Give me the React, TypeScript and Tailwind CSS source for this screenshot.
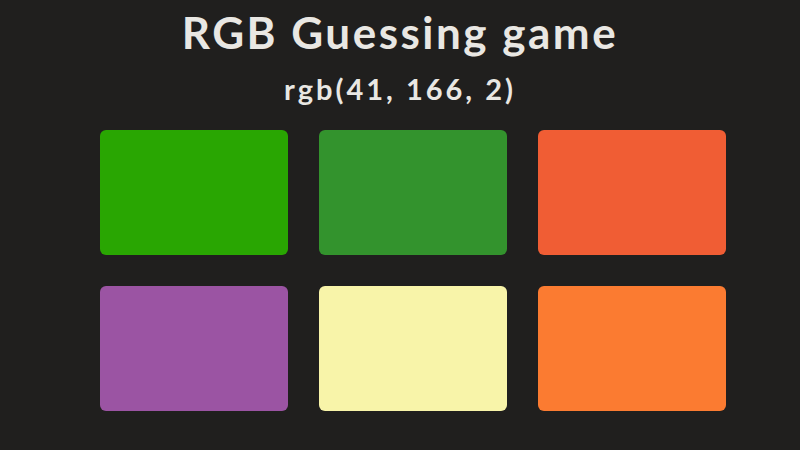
import React from "react";

const swatches = ["#29a602", "#33932d", "#f05d34", "#9b54a3", "#f8f4a9", "#fb7b31"];

export default function App() {
  return (
    <div className="w-[800px] h-[450px] bg-[#201f1e] text-[#e9e7e3] overflow-hidden" style={{ fontFamily: "Lato, 'Liberation Sans', sans-serif" }}>
      <h1 className="text-center text-[44px] font-bold leading-none pt-[10px] tracking-[2.5px]">RGB Guessing game</h1>
      <h2 className="text-center text-[29px] font-bold leading-none mt-[20px] tracking-[3px]">rgb(41, 166, 2)</h2>
      <div className="grid grid-cols-[188px_188px_188px] gap-[31px] pl-[100px] mt-[27px]">
        {swatches.map((c) => (
          <div key={c} className="h-[125px] rounded-md" style={{ backgroundColor: c }} />
        ))}
      </div>
    </div>
  );
}
